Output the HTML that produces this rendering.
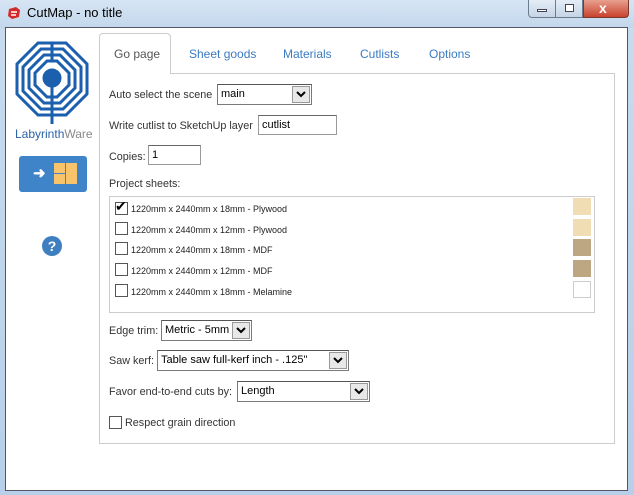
<!DOCTYPE html>
<html><head><style>
*{box-sizing:border-box;margin:0;padding:0}
body{width:634px;height:495px;overflow:hidden;font-family:"Liberation Sans",sans-serif;font-size:11px;color:#333;background:linear-gradient(#c9dcef,#b7cfe8);position:relative}
.a{position:absolute}
.l{position:absolute;font-size:10.8px;color:#333}
.sel{position:absolute;border:1px solid #7a7a7a;border-top-color:#555;background:#fff;font-size:11px;padding:2px 3px;line-height:15px;color:#000}
.sel .b{position:absolute;right:1px;top:1px;bottom:1px;width:18px;background:#e8e8e8;border:1px solid #999}
.sel svg{position:absolute;right:5px;top:6px}
.inp{position:absolute;border:1px solid #999;border-top-color:#666;background:#fff;font-size:11px;padding:2px 3px;line-height:14px;color:#000}
.cb{position:absolute;width:13px;height:13px;border:1px solid #555;background:#fff}
.row{position:absolute;left:131px;font-size:9px;color:#222}
.sw{position:absolute;left:573px;width:18px;height:17px}
</style></head><body>
<div class="a" style="left:0;top:0;width:634px;height:28px;background:linear-gradient(#d6e5f4,#c3d7ec)"></div>
<svg class="a" style="left:7px;top:6px" width="14" height="14" viewBox="0 0 14 14"><path d="M2 3 L9 1 L13 4 L12 11 L5 13 L1 10Z" fill="#d32a2a"/><path d="M4 6h6M4 9h5" stroke="#fff" stroke-width="1.5"/></svg>
<div class="a" style="left:27px;top:5px;font-size:13px;color:#000">CutMap - no title</div>
<div class="a" style="left:528px;top:0;width:28px;height:18px;border:1px solid #6c7c90;border-top:none;border-radius:0 0 0 4px;background:linear-gradient(#e4edf7,#c5d4e6)"></div>
<div class="a" style="left:537px;top:9px;width:10px;height:3px;background:#fff;border:1px solid #445"></div>
<div class="a" style="left:556px;top:0;width:27px;height:18px;border:1px solid #6c7c90;border-top:none;border-left:none;background:linear-gradient(#e4edf7,#c5d4e6)"></div>
<div class="a" style="left:565px;top:4px;width:9px;height:8px;border:1px solid #445;background:#fff"></div>
<div class="a" style="left:583px;top:0;width:46px;height:18px;border:1px solid #7a3a30;border-top:none;border-radius:0 0 4px 0;background:linear-gradient(#e8a08f,#c9432e)"></div>
<div class="a" style="left:599px;top:0;font-size:14px;font-weight:bold;color:#fff">x</div>
<div class="a" style="left:5px;top:27px;width:623px;height:464px;border:1px solid #556;background:#fff"></div>
<svg class="a" style="left:14px;top:40px" width="76" height="84" viewBox="0 0 76 84" fill="none" stroke="#1b5fae" stroke-width="3">
<path d="M24 3 L52 3 L73 24 L73 54 L52 75 L24 75 L3 54 L3 24Z"/>
<path d="M27 9 L49 9 L67 27 L67 51 L49 69 L27 69 L9 51 L9 27Z"/>
<path d="M30 15 L46 15 L61 30 L61 48 L46 63 L30 63 L15 48 L15 30Z"/>
<path d="M33 21 L43 21 L55 33 L55 45 L43 57 L33 57 L21 45 L21 33Z"/>
<circle cx="38" cy="38" r="8" fill="#1b5fae"/>
<path d="M38 46 V84 M38 3 V21"/>
</svg>
<div class="a" style="left:15px;top:127px;font-size:12px;color:#2b63a8">Labyrinth<span style="color:#888">Ware</span></div>
<div class="a" style="left:19px;top:156px;width:68px;height:36px;background:#3f84c8;border-radius:3px"></div>
<div class="a" style="left:33px;top:164px;color:#fff;font-size:15px;font-weight:bold">➜</div>
<div class="a" style="left:54px;top:163px;width:11px;height:10px;background:#f7c46c"></div>
<div class="a" style="left:66px;top:163px;width:11px;height:21px;background:#f7c46c"></div>
<div class="a" style="left:54px;top:174px;width:11px;height:10px;background:#f7c46c"></div>
<div class="a" style="left:42px;top:236px;width:20px;height:20px;border-radius:50%;background:#3f7fc0;color:#fff;font-weight:bold;font-size:14px;text-align:center;line-height:20px">?</div>
<div class="a" style="left:99px;top:73px;width:516px;height:371px;border:1px solid #ccc"></div>
<div class="a" style="left:99px;top:33px;width:72px;height:41px;border:1px solid #ccc;border-bottom:none;border-radius:4px 4px 0 0;background:#fff"></div>
<div class="a" style="left:114px;top:47px;font-size:12px;color:#555">Go page</div>
<div class="a" style="left:189px;top:47px;font-size:12px;color:#3b7bc2">Sheet goods</div>
<div class="a" style="left:283px;top:47px;font-size:12px;color:#3b7bc2">Materials</div>
<div class="a" style="left:360px;top:47px;font-size:12px;color:#3b7bc2">Cutlists</div>
<div class="a" style="left:429px;top:47px;font-size:12px;color:#3b7bc2">Options</div>
<div class="l" style="left:109px;top:89px">Auto select the scene</div>
<div class="sel" style="left:217px;top:84px;width:95px;height:21px">main<div class="b"></div><svg width="10" height="7"><path d="M1 1L5 5L9 1" stroke="#000" stroke-width="2" fill="none"/></svg></div>
<div class="l" style="left:109px;top:120px">Write cutlist to SketchUp layer</div>
<div class="inp" style="left:258px;top:115px;width:79px;height:20px">cutlist</div>
<div class="l" style="left:109px;top:151px">Copies:</div>
<div class="inp" style="left:148px;top:145px;width:53px;height:20px">1</div>
<div class="l" style="left:109px;top:178px">Project sheets:</div>
<div class="a" style="left:109px;top:196px;width:486px;height:117px;border:1px solid #ccc"></div>
<div class="cb" style="left:115px;top:202px"></div><div class="a" style="left:115px;top:198px;font-size:14px;color:#000">✔</div>
<div class="row" style="top:204px">1220mm x 2440mm x 18mm - Plywood</div>
<div class="cb" style="left:115px;top:222px"></div><div class="row" style="top:225px">1220mm x 2440mm x 12mm - Plywood</div>
<div class="cb" style="left:115px;top:242px"></div><div class="row" style="top:245px">1220mm x 2440mm x 18mm - MDF</div>
<div class="cb" style="left:115px;top:263px"></div><div class="row" style="top:266px">1220mm x 2440mm x 12mm - MDF</div>
<div class="cb" style="left:115px;top:284px"></div><div class="row" style="top:287px">1220mm x 2440mm x 18mm - Melamine</div>
<div class="sw" style="top:198px;background:#f0ddb4"></div>
<div class="sw" style="top:219px;background:#f0ddb4"></div>
<div class="sw" style="top:239px;background:#bca782"></div>
<div class="sw" style="top:260px;background:#bca782"></div>
<div class="sw" style="top:281px;background:#fff;border:1px solid #ccc"></div>
<div class="l" style="left:109px;top:325px">Edge trim:</div>
<div class="sel" style="left:161px;top:320px;width:91px;height:21px">Metric - 5mm<div class="b"></div><svg width="10" height="7"><path d="M1 1L5 5L9 1" stroke="#000" stroke-width="2" fill="none"/></svg></div>
<div class="l" style="left:109px;top:355px">Saw kerf:</div>
<div class="sel" style="left:157px;top:350px;width:192px;height:21px">Table saw full-kerf inch - .125"<div class="b"></div><svg width="10" height="7"><path d="M1 1L5 5L9 1" stroke="#000" stroke-width="2" fill="none"/></svg></div>
<div class="l" style="left:109px;top:386px">Favor end-to-end cuts by:</div>
<div class="sel" style="left:237px;top:381px;width:133px;height:21px">Length<div class="b"></div><svg width="10" height="7"><path d="M1 1L5 5L9 1" stroke="#000" stroke-width="2" fill="none"/></svg></div>
<div class="cb" style="left:109px;top:416px"></div>
<div class="l" style="left:125px;top:417px">Respect grain direction</div>
</body></html>
